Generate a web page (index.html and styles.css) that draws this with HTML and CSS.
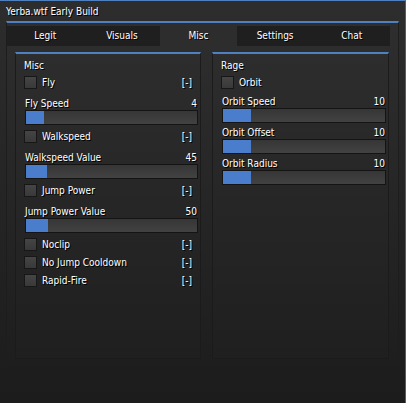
FILE: index.html
```html
<!DOCTYPE html>
<html>
<head>
<meta charset="utf-8">
<link rel="stylesheet" href="styles.css">
</head>
<body>
<div class="window">
  <div class="title">Yerba.wtf Early Build</div>
  <div class="frame">
    <div class="tabs">
      <div class="tab">Legit</div>
      <div class="tab">Visuals</div>
      <div class="tab active">Misc</div>
      <div class="tab">Settings</div>
      <div class="tab">Chat</div>
    </div>
    <div class="content">
      <div class="section section-misc">
        <div class="header">Misc</div>
        <div class="col col-misc">
          <div class="toggle"><span class="box"></span><span class="name">Fly</span><span class="key">[-]</span></div>
          <div class="slider">
            <div class="slider-label"><span>Fly Speed</span><span>4</span></div>
            <div class="bar"><div class="fill" style="width:18px"></div></div>
          </div>
          <div class="toggle"><span class="box"></span><span class="name">Walkspeed</span><span class="key">[-]</span></div>
          <div class="slider">
            <div class="slider-label"><span>Walkspeed Value</span><span>45</span></div>
            <div class="bar"><div class="fill" style="width:21px"></div></div>
          </div>
          <div class="toggle"><span class="box"></span><span class="name">Jump Power</span><span class="key">[-]</span></div>
          <div class="slider">
            <div class="slider-label"><span>Jump Power Value</span><span>50</span></div>
            <div class="bar"><div class="fill" style="width:22px"></div></div>
          </div>
          <div class="toggle"><span class="box"></span><span class="name">Noclip</span><span class="key">[-]</span></div>
          <div class="toggle"><span class="box"></span><span class="name">No Jump Cooldown</span><span class="key">[-]</span></div>
          <div class="toggle"><span class="box"></span><span class="name">Rapid-Fire</span><span class="key">[-]</span></div>
        </div>
      </div>
      <div class="section section-rage">
        <div class="header">Rage</div>
        <div class="col col-rage">
          <div class="toggle"><span class="box"></span><span class="name">Orbit</span></div>
          <div class="slider">
            <div class="slider-label"><span>Orbit Speed</span><span>10</span></div>
            <div class="bar"><div class="fill" style="width:28px"></div></div>
          </div>
          <div class="slider">
            <div class="slider-label"><span>Orbit Offset</span><span>10</span></div>
            <div class="bar"><div class="fill" style="width:28px"></div></div>
          </div>
          <div class="slider">
            <div class="slider-label"><span>Orbit Radius</span><span>10</span></div>
            <div class="bar"><div class="fill" style="width:28px"></div></div>
          </div>
        </div>
      </div>
    </div>
  </div>
</div>
</body>
</html>
```
FILE: styles.css
```css
* { box-sizing: border-box; }
html, body {
  margin: 0;
  padding: 0;
  background: #1c1c1c;
}
body {
  font-family: "DejaVu Sans Condensed", "Liberation Sans", Arial, sans-serif;
  font-size: 10px;
  color: #ffffff;
  text-shadow: 1px 1px 0 #000;
}
.window {
  width: 406px;
  height: 403px;
  border-top: 1px solid #4f80c0;
  border-right: 1px solid #5c5c5c;
  background: linear-gradient(to bottom, #2d2d2d 0%, #262626 40%, #1c1c1c 100%);
  overflow: hidden;
}
.title {
  height: 20px;
  padding: 3px 0 0 6px;
  line-height: 16px;
}
.frame {
  margin-left: 6px;
  width: 393px;
  height: 344px;
  border: 1px solid #1d1d1d;
  border-top: 2px solid #4f80c0;
  padding-top: 3px;
  background: linear-gradient(to bottom, #2e2e2e 0%, #262626 50%, #1e1e1e 100%);
}
.tabs {
  display: flex;
  width: 383px;
  height: 20px;
  background: #1f1f1f;
}
.tab {
  flex: 1;
  text-align: center;
  line-height: 20px;
}
.tab.active {
  background: #2d2d2d;
}
.content {
  display: flex;
  gap: 11px;
  margin-top: 6px;
  padding-left: 8px;
}
.section {
  height: 307px;
  border: 1px solid #1b1b1b;
  border-top: 2px solid #4f80c0;
  padding: 5px 2px 0 8px;
  background: linear-gradient(to bottom, #2d2d2d 0%, #262626 50%, #1f1f1f 100%);
}
.section-misc { width: 186px; }
.section-rage { width: 177px; }
.header {
  line-height: 14px;
  height: 14px;
  margin-bottom: 3px;
}
.col {
  display: flex;
  flex-direction: column;
}
.col-misc { gap: 5px; }
.col-misc .slider { padding-top: 3px; }
.col-rage { gap: 3px; }
.col-rage .toggle { margin-bottom: 3px; }
.toggle {
  display: flex;
  align-items: center;
  height: 13px;
  line-height: 13px;
  padding-right: 6px;
}
.box {
  width: 13px;
  height: 13px;
  border: 1px solid #171717;
  background: linear-gradient(to bottom, #454545, #393939);
  margin-right: 5px;
  flex: none;
}
.name { flex: 1; }
.key { flex: none; }
.slider {
  margin-left: 1px;
}
.slider-label {
  display: flex;
  justify-content: space-between;
  height: 13px;
  line-height: 13px;
  padding-right: 1px;
}
.bar {
  height: 15px;
  border: 1px solid #141414;
  background: linear-gradient(to bottom, #363636, #424242);
}
.fill {
  height: 100%;
  background: #4a7dcb;
}
```
